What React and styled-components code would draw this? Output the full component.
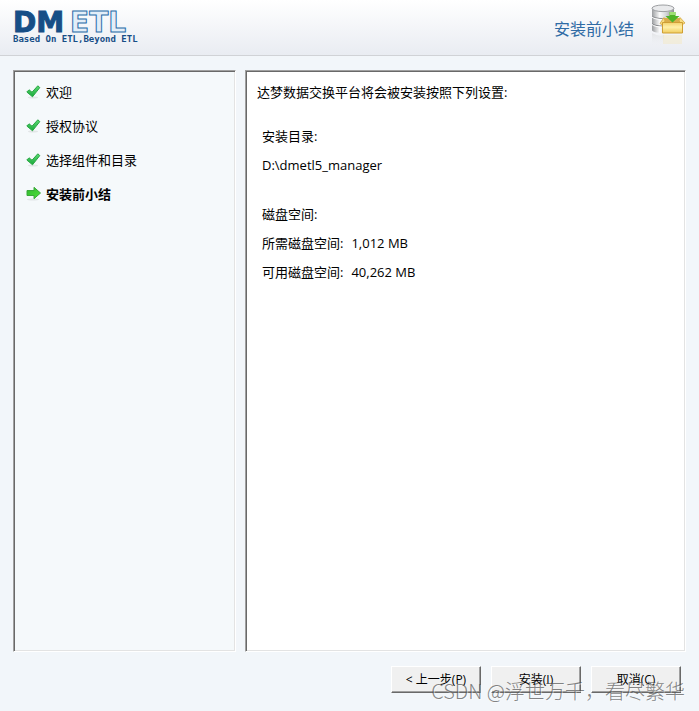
import React from "react";
import styled, { createGlobalStyle, css } from "styled-components";

const GlobalStyle = createGlobalStyle`
  *, *::before, *::after { box-sizing: border-box; }
  body {
    margin: 0;
    background: #f2f6fa;
    color: #000;
    font: 13px/18px "Open Sans", "Noto Sans CJK SC", sans-serif;
  }
`;

const Wizard = styled.div`
  position: relative;
  display: flex;
  flex-direction: column;
  min-height: 100vh;
`;

const Header = styled.header`
  display: flex;
  align-items: flex-start;
  justify-content: space-between;
  height: 56px;
  padding: 4px 12px 0 13px;
  background: linear-gradient(#ffffff, #e9ecf2);
  border-bottom: 1px solid #d0d2d6;
`;

const Brand = styled.div`
  padding-top: 6px;
  color: #174e86;
`;

const BrandName = styled.div`
  display: flex;
  gap: 6px;
  font: bold 28px/25px "DejaVu Sans", sans-serif;
`;

const Solid = styled.span`
  -webkit-text-stroke: 1px #174e86;
`;

const Outlined = styled.span`
  color: #e3eef8;
  -webkit-text-stroke: 1px #2a6caa;
`;

const Tagline = styled.div`
  font: bold 9px/9px "DejaVu Sans Mono", monospace;
`;

const StepHeading = styled.div`
  display: flex;
  align-items: flex-start;
  gap: 17px;
`;

const Title = styled.h1`
  margin: 0;
  padding-top: 13px;
  color: #2f6ba5;
  font-size: 16px;
  font-weight: 400;
  line-height: 24px;
`;

const Body = styled.main`
  display: grid;
  grid-template-columns: 223fr 441fr;
  gap: 9px;
  flex: 1;
  padding: 14px 13px 0;
`;

const sunken = css`
  border: 1px solid;
  border-color: #a0a0a0 #fff #fff #a0a0a0;
  box-shadow: inset 1px 1px 0 #696969, inset -1px -1px 0 #e3e3e3;
`;

const Steps = styled.ol`
  ${sunken}
  display: flex;
  flex-direction: column;
  gap: 16px;
  margin: 0;
  padding: 12px;
  background: #f5f9fb;
  list-style: none;
`;

const Step = styled.li`
  display: flex;
  align-items: center;
  gap: 4px;
  font-weight: ${(p) => (p.$current ? 700 : 400)};
`;

const Summary = styled.section`
  ${sunken}
  padding: 12px 11px;
  background: #fff;
`;

const Line = styled.p`
  margin: 0;
`;

const Group = styled.div`
  display: flex;
  flex-direction: column;
  gap: 11px;
  margin: ${(p) => p.$top}px 0 0 5px;
`;

const Value = styled.span`
  margin-left: 8px;
`;

const Footer = styled.footer`
  display: flex;
  justify-content: flex-end;
  gap: 10px;
  padding: 14px 18px 18px;
`;

const Button = styled.button`
  width: 90px;
  height: 27px;
  padding: 0;
  color: #000;
  background: #f0f0f0;
  border: 1px solid;
  border-color: #fff #696969 #696969 #fff;
  box-shadow: inset -1px -1px 0 #a0a0a0;
  font: 12px/16px "Open Sans", "Noto Sans CJK SC", sans-serif;
`;

const Watermark = styled.div`
  position: absolute;
  right: 14px;
  bottom: 6px;
  color: rgba(80, 80, 80, 0.7);
  font: 300 20px/28px "Noto Sans CJK SC", sans-serif;
  text-shadow: 1px 1px 0 rgba(255, 255, 255, 0.5);
  pointer-events: none;
  white-space: nowrap;
`;

function CheckIcon() {
  return (
    <svg width="16" height="16" viewBox="0 0 16 16" aria-hidden="true">
      <defs>
        <linearGradient id="tick" x1="0" y1="0" x2="0" y2="1">
          <stop offset="0" stopColor="#5bdc74" />
          <stop offset="1" stopColor="#18a83a" />
        </linearGradient>
      </defs>
      <ellipse cx="7" cy="13.500" rx="5" ry="1" fill="#e2e6e7" />
      <path d="M.8 8 3 5.800l3 2.400L11.800 1.800l2 1.800L6.500 12.800z" fill="url(#tick)" stroke="#2aa544" strokeWidth="1" strokeLinejoin="round" />
    </svg>
  );
}

function ArrowIcon() {
  return (
    <svg width="16" height="16" viewBox="0 0 16 16" aria-hidden="true">
      <defs>
        <linearGradient id="arrow" x1="0" y1="0" x2="1" y2="1">
          <stop offset="0" stopColor="#2fb92f" />
          <stop offset="1" stopColor="#4fe03a" />
        </linearGradient>
      </defs>
      <ellipse cx="7" cy="13.500" rx="6" ry="1" fill="#e2e6e7" />
      <path d="M1 4.500h7V1.300L14.500 7 8 12.700V9.500H1z" fill="url(#arrow)" stroke="#3aa83a" strokeLinejoin="round" />
    </svg>
  );
}

function PackageIcon() {
  return (
    <svg width="36" height="42" viewBox="0 0 36 42" aria-hidden="true">
      <defs>
        <linearGradient id="disk" x1="0" x2="1" y1="0" y2="0">
          <stop offset="0" stopColor="#9b9da0" />
          <stop offset="0.35" stopColor="#fbfbfb" />
          <stop offset="0.65" stopColor="#d3d5d8" />
          <stop offset="1" stopColor="#8b8d90" />
        </linearGradient>
        <linearGradient id="carton" x1="0" x2="0" y1="0" y2="1">
          <stop offset="0" stopColor="#f3d26c" />
          <stop offset="0.45" stopColor="#fff0a8" />
          <stop offset="1" stopColor="#f0cc5c" />
        </linearGradient>
        <linearGradient id="fade" x1="0" x2="0" y1="0" y2="1">
          <stop offset="0" stopColor="#dfe0e2" stopOpacity="0.8" />
          <stop offset="1" stopColor="#eef0f3" stopOpacity="0" />
        </linearGradient>
      </defs>
      <path d="M1 29q7 4 12 2v11H1z" fill="url(#fade)" />
      <path d="M12 31h19v9H12z" fill="#f7e6ae" opacity="0.35" />
      <path d="M1 4v22c0 2 5 3 11 3s11-1 11-3V4z" fill="url(#disk)" />
      <path d="M1 12c2 3 19 4 22 0M1 19.500c2 3 19 4 22 0" fill="none" stroke="#85878a" />
      <path d="M1 13c2 3 19 4 22 0M1 20.500c2 3 19 4 22 0" fill="none" stroke="#fff" />
      <ellipse cx="12" cy="4.300" rx="11" ry="3.300" fill="#e9eaec" stroke="#9d9fa2" />
      <path d="M13 14h16l3 5H11z" fill="#d9ad4c" />
      <path d="M13 13.500 9 19.500l2.500 1.500L14 17zM29 13.500l5 5.500-2.500 1.500L28 17z" fill="#f7dc82" stroke="#d3a63d" strokeWidth="0.800" />
      <path d="M11.500 18.500h20V29h-20z" fill="url(#carton)" stroke="#cf9f35" />
      <path d="M18.500 8h6v4h4l-7 6.500-7-6.500h4z" fill="#4fb328" />
      <path d="M18.500 8h6v3h-6z" fill="#9fdf74" />
    </svg>
  );
}

const steps = [
  { label: "欢迎" },
  { label: "授权协议" },
  { label: "选择组件和目录" },
  { label: "安装前小结", current: true },
];

export default function App() {
  return (
    <>
      <GlobalStyle />
      <Wizard>
        <Header>
          <Brand>
            <BrandName>
              <Solid>DM</Solid>
              <Outlined>ETL</Outlined>
            </BrandName>
            <Tagline>Based On ETL,Beyond ETL</Tagline>
          </Brand>
          <StepHeading>
            <Title>安装前小结</Title>
            <PackageIcon />
          </StepHeading>
        </Header>
        <Body>
          <Steps>
            {steps.map((step) => (
              <Step key={step.label} $current={step.current} aria-current={step.current ? "step" : undefined}>
                {step.current ? <ArrowIcon /> : <CheckIcon />}
                {step.label}
              </Step>
            ))}
          </Steps>
          <Summary>
            <Line>达梦数据交换平台将会被安装按照下列设置:</Line>
            <Group $top={26}>
              <Line>安装目录:</Line>
              <Line>D:\dmetl5_manager</Line>
            </Group>
            <Group $top={31}>
              <Line>磁盘空间:</Line>
              <Line>所需磁盘空间:<Value>1,012 MB</Value></Line>
              <Line>可用磁盘空间:<Value>40,262 MB</Value></Line>
            </Group>
          </Summary>
        </Body>
        <Footer>
          <Button type="button">&lt; 上一步(P)</Button>
          <Button type="button">安装(I)</Button>
          <Button type="button">取消(C)</Button>
        </Footer>
        <Watermark>CSDN @浮世万千，看尽繁华</Watermark>
      </Wizard>
    </>
  );
}
